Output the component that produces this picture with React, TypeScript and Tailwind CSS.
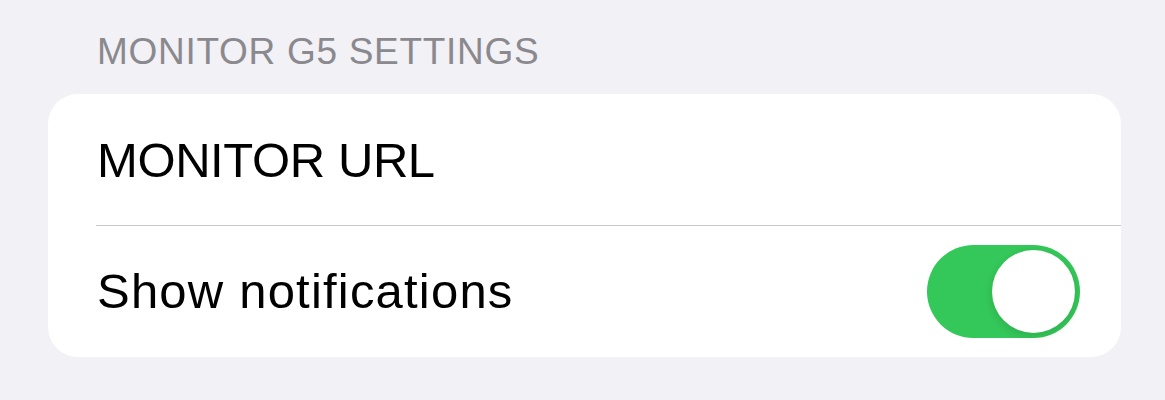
import { useState } from "react";

export default function App() {
  const [notificacoes, setNotificacoes] = useState(true);

  return (
    <div className="h-[400px] w-full bg-[#f2f1f6] pt-[30px] px-[48px] font-['Liberation_Sans',Arial,sans-serif]">
      <h2 className="pl-[49px] text-[37px] leading-[44px] text-[#8a898e] tracking-[0.7px]">
        MONITOR G5 SETTINGS
      </h2>

      <div className="mt-[20px] w-[1073px] rounded-[30px] bg-white">
        <div className="flex h-[131px] items-center pl-[49px] pt-[3px]">
          <span className="text-[49px] text-black tracking-[-0.4px]">MONITOR URL</span>
        </div>

        <div className="ml-[48px] h-[1px] bg-[#c8c7cc]" />

        <div className="flex h-[131px] items-center justify-between pl-[49px] pr-[41px]">
          <span className="text-[49px] text-black tracking-[1.2px]">Show notifications</span>

          <button
            onClick={() => setNotificacoes(!notificacoes)}
            className={`flex h-[93px] w-[153px] items-center rounded-full p-[5px] ${
              notificacoes ? "justify-end bg-[#34c759]" : "justify-start bg-[#e9e9ea]"
            }`}
          >
            <span className="h-[83px] w-[83px] rounded-full bg-white shadow-[0_3px_8px_rgba(0,0,0,0.12)]" />
          </button>
        </div>
      </div>
    </div>
  );
}
